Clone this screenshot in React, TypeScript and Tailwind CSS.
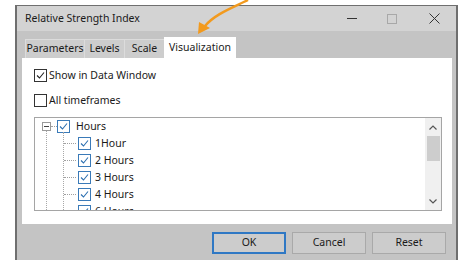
import React from "react";

const font = { fontFamily: '"Noto Sans", "Segoe UI", Arial, sans-serif' };

function Check({ checked, blue }: { checked: boolean; blue?: boolean }) {
  return (
    <div
      className={`w-[13px] h-[13px] border bg-white flex items-center justify-center shrink-0 ${
        blue ? "border-[#3a7ab8]" : "border-[#333333]"
      }`}
    >
      {checked && (
        <svg width="9" height="9" viewBox="0 0 9 9">
          <path d="M1 4.5 L3.5 7 L8 1.5" fill="none" stroke={blue ? "#2c6fb0" : "#222"} strokeWidth="1.1" />
        </svg>
      )}
    </div>
  );
}

function TreeChild({ label }: { label: string }) {
  return (
    <div className="h-[17px] flex items-center relative">
      <div className="w-[12px] border-t border-dotted border-[#a0a0a0] ml-[1px] mr-[2px]" />
      <Check checked blue />
      <span className="ml-[4px] text-[10.5px] text-[#1a1a1a]">{label}</span>
    </div>
  );
}

export default function App() {
  return (
    <div className="w-[474px] h-[260px] bg-white relative overflow-hidden" style={font}>
      <div className="absolute left-[15px] top-[5px] w-[443px] h-[260px] border-t border-l-2 border-r-2 border-[#6f6f6f] bg-[#c4c4c4] flex flex-col">
        {/* title bar */}
        <div className="h-[25px] bg-[#d3d3d3] flex items-center pl-[8px] shrink-0">
          <span className="text-[10.5px] text-[#1a1a1a]">Relative Strength Index</span>
          <div className="ml-auto flex items-center h-full">
            <div className="w-[40px] flex justify-center">
              <div className="w-[10px] h-[1px] bg-[#333]" />
            </div>
            <div className="w-[40px] flex justify-center">
              <div className="w-[10px] h-[10px] border border-[#a8a8a8]" />
            </div>
            <div className="w-[44px] flex justify-center">
              <svg width="11" height="11" viewBox="0 0 11 11">
                <path d="M0.5 0.5 L10.5 10.5 M10.5 0.5 L0.5 10.5" stroke="#333" strokeWidth="1" />
              </svg>
            </div>
          </div>
        </div>
        {/* tabs */}
        <div className="h-[27px] flex items-end pl-[8px] shrink-0">
          <div className="h-[19px] flex items-center justify-center bg-[#cdcdcd] border-t border-l border-[#dcdcdc] text-[10.5px] text-[#1a1a1a] w-[59px]">Parameters</div>
          <div className="h-[19px] flex items-center justify-center bg-[#cdcdcd] border-t border-l border-[#dcdcdc] text-[10.5px] text-[#1a1a1a] w-[40px]">Levels</div>
          <div className="h-[19px] flex items-center justify-center bg-[#cdcdcd] border-t border-l border-[#dcdcdc] text-[10.5px] text-[#1a1a1a] w-[40px]">Scale</div>
          <div className="h-[21px] flex items-center justify-center bg-white text-[10.5px] text-[#1a1a1a] w-[72px]">Visualization</div>
        </div>
        {/* panel */}
        <div className="ml-[5px] mr-[4px] bg-white h-[166px] shrink-0 flex flex-col pl-[12px] pr-[10px] pt-[11px]">
          <div className="flex items-center h-[13px]">
            <Check checked />
            <span className="ml-[2px] text-[10.5px] text-[#1a1a1a]">Show in Data Window</span>
          </div>
          <div className="flex items-center h-[13px] mt-[12px]">
            <Check checked={false} />
            <span className="ml-[2px] text-[10.5px] text-[#1a1a1a]">All timeframes</span>
          </div>
          <div className="mt-[10px] h-[94px] border border-[#a5a5a5] flex overflow-hidden">
            <div className="flex-1 relative overflow-hidden pl-[7px]">
              <div className="absolute left-[11px] top-[12px] h-[82px] border-l border-dotted border-[#a8a8a8]" />
              <div className="absolute left-[28px] top-[14px] h-[82px] border-l border-dotted border-[#a8a8a8]" />
              <div className="h-[17px] flex items-center">
                <div className="w-[9px] h-[9px] border border-[#9a9a9a] bg-white flex items-center justify-center relative z-10">
                  <div className="w-[5px] h-[1px] bg-[#444]" />
                </div>
                <div className="w-[6px] border-t border-dotted border-[#a0a0a0]" />
                <Check checked blue />
                <span className="ml-[6px] text-[10.5px] text-[#1a1a1a]">Hours</span>
              </div>
              <div className="pl-[21px]">
                <TreeChild label="1Hour" />
                <TreeChild label="2 Hours" />
                <TreeChild label="3 Hours" />
                <TreeChild label="4 Hours" />
                <TreeChild label="6 Hours" />
              </div>
            </div>
            <div className="w-[16px] bg-[#f0f0f0] flex flex-col items-center shrink-0">
              <div className="h-[18px] flex items-center justify-center">
                <svg width="8" height="5" viewBox="0 0 8 5">
                  <path d="M0.5 4.5 L4 1 L7.5 4.5" fill="none" stroke="#555" strokeWidth="1.2" />
                </svg>
              </div>
              <div className="w-[13px] h-[25px] bg-[#cdcdcd]" />
              <div className="flex-1" />
              <div className="h-[18px] flex items-center justify-center">
                <svg width="8" height="5" viewBox="0 0 8 5">
                  <path d="M0.5 0.5 L4 4 L7.5 0.5" fill="none" stroke="#555" strokeWidth="1.2" />
                </svg>
              </div>
            </div>
          </div>
        </div>
        {/* buttons */}
        <div className="flex justify-end gap-[6px] pr-[10px] pt-[8px]">
          <div className="w-[74px] h-[22px] bg-[#cccccc] border-2 border-[#2f78c4] flex items-center justify-center text-[10.5px] text-[#1a1a1a]">OK</div>
          <div className="w-[74px] h-[22px] bg-[#cccccc] border border-[#a9a9a9] flex items-center justify-center text-[10.5px] text-[#1a1a1a]">Cancel</div>
          <div className="w-[74px] h-[22px] bg-[#cccccc] border border-[#a9a9a9] flex items-center justify-center text-[10.5px] text-[#1a1a1a]">Reset</div>
        </div>
      </div>
      {/* orange arrow */}
      <svg className="absolute left-0 top-0" width="474" height="60" viewBox="0 0 474 60">
        <path d="M248 0 C232 8 215 14 205 26" fill="none" stroke="#f29a1e" strokeWidth="2.5" />
        <path d="M198 34 L199 22 L210 28 Z" fill="#f29a1e" />
      </svg>
    </div>
  );
}
